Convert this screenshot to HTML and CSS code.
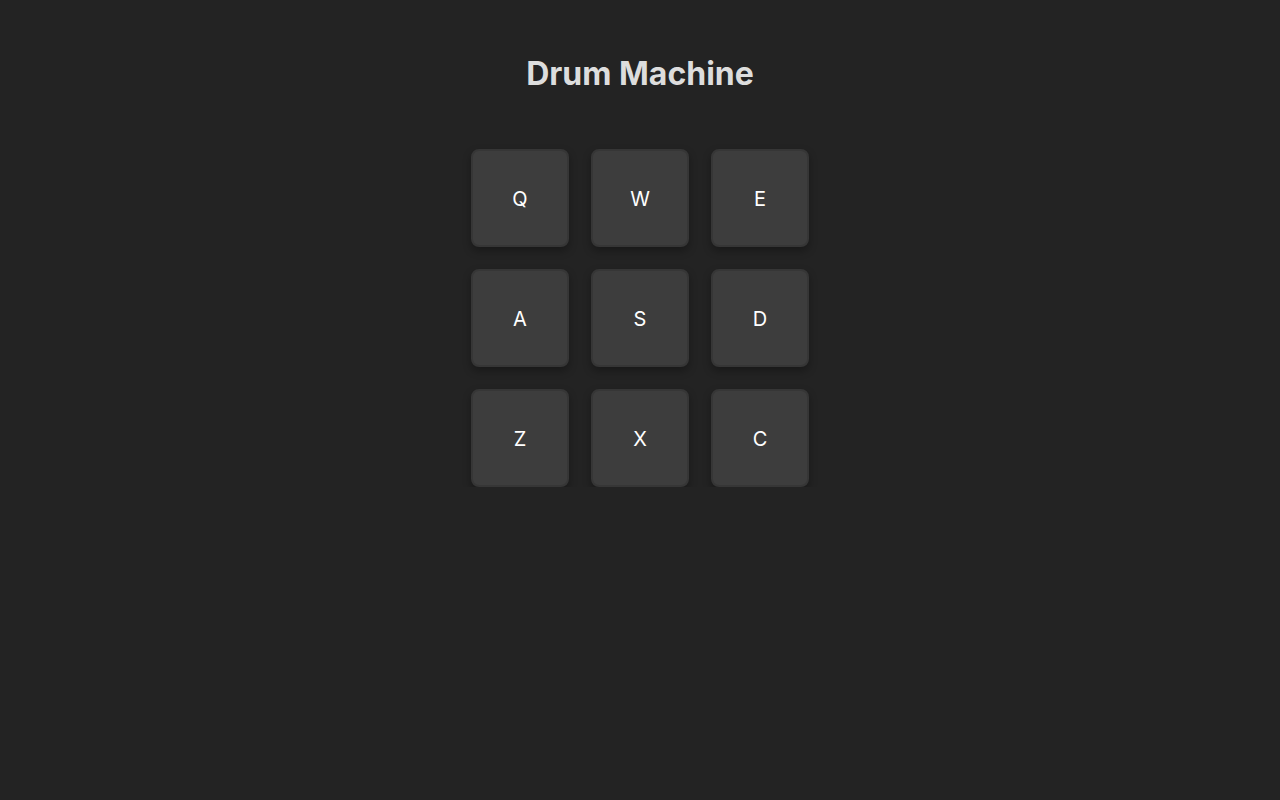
FILE: index.html
```html
<!DOCTYPE html>
<html lang="en">
<head>
  <meta charset="UTF-8">
  <meta name="viewport" content="width=device-width, initial-scale=1.0">
  <title>Drum Machine</title>
  <link rel="stylesheet" href="styles.css">
</head>
<body>

  <div class="app">
    <h1>Drum Machine</h1>

    <!-- Pads -->
    <div class="pads">
      <button class="pad">Q</button>
      <button class="pad">W</button>
      <button class="pad">E</button>
      <button class="pad">A</button>
      <button class="pad">S</button>
      <button class="pad">D</button>
      <button class="pad">Z</button>
      <button class="pad">X</button>
      <button class="pad">C</button>
    </div>
  </div>

</body>
</html>
```
FILE: styles.css
```css
body {
  font-family: Inter, "Noto Sans", sans-serif;
  background-color: #232323;
  color: #e0e0e0;
  margin: 0;
  padding: 0;
}
.app {
  display: flex;
  flex-direction: column;
  align-items: center;
  padding-top: 55px;
}
h1 {
  margin: 0;
  font-size: 32px;
  font-weight: 700;
  line-height: 38px;
  color: #dddddd;
}
.pads {
  display: grid;
  grid-template-columns: repeat(3, 98px);
  gap: 22px;
  margin-top: 56px;
}
.pad {
  width: 98px;
  height: 98px;
  padding: 2px 0 0;
  background: #3d3d3d;
  border: 2px solid #363636;
  border-radius: 8px;
  box-shadow: 0 4px 8px rgba(0, 0, 0, 0.3);
  color: #ffffff;
  font-family: Inter, "Noto Sans", sans-serif;
  font-size: 20px;
  cursor: pointer;
}
.pad:hover {
  background: #474747;
}
```
